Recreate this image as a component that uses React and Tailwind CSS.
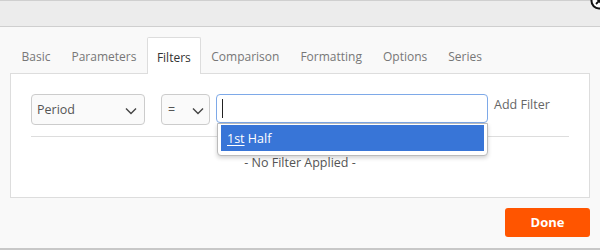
import React from "react";

const tabs = ["Basic", "Parameters", "Filters", "Comparison", "Formatting", "Options", "Series"];

function Chevron() {
  return (
    <svg width="14" height="14" viewBox="0 0 14 14" fill="none" stroke="#444" strokeWidth="1.4">
      <path d="M2 4.5 L7 9.5 L12 4.5" />
    </svg>
  );
}

export default function App() {
  return (
    <div
      className="relative w-[600px] h-[250px] overflow-hidden bg-[#f9f9f9] border-b-2 border-[#c8c8c8]"
      style={{ fontFamily: '"Open Sans", "Noto Sans", sans-serif' }}
    >
      <div className="h-[27px] bg-[#ececec] border-t border-b border-[#cfcfcf]"></div>
      <svg className="absolute right-[-8px] top-[-8px]" width="18" height="18" viewBox="0 0 18 18">
        <circle cx="9" cy="9" r="7.5" fill="#fff" stroke="#111" strokeWidth="2" />
        <path d="M6 6 L12 12 M12 6 L6 12" stroke="#111" strokeWidth="1.8" />
      </svg>

      <div className="flex pl-[11px] pt-[10px]">
        {tabs.map((t) => (
          <div
            key={t}
            className={
              t === "Filters"
                ? "h-[37px] px-[9px] pt-[3px] flex items-center text-[12px] text-[#333] bg-white border border-b-0 border-[#ddd] rounded-t-[2px] relative z-10 mb-[-1px]"
                : "h-[36px] px-[10.5px] pt-[3px] flex items-center text-[12px] text-[#777]"
            }
          >
            {t}
          </div>
        ))}
      </div>

      <div className="mx-[10px] h-[125px] bg-white border border-[#ddd] px-[20px] pt-[20px] relative">
        <div className="flex items-start">
          <div className="w-[114px] h-[31px] rounded-[4px] border border-[#ccc] bg-[#fafafa] flex items-center justify-between pl-[5px] pr-[6px] pt-[2px] text-[12.5px] text-[#555]">
            <span>Period</span>
            <Chevron />
          </div>
          <div className="ml-[16px] w-[49px] h-[31px] rounded-[4px] border border-[#ccc] bg-[#fafafa] flex items-center justify-between pl-[6px] pr-[4px] pt-[2px] text-[12.5px] text-[#555]">
            <span>=</span>
            <Chevron />
          </div>
          <div className="relative ml-[6px]">
            <div className="w-[272px] h-[29px] rounded-[4px] border border-[#7ea9e8] bg-white flex items-center pl-[5px]">
              <div className="w-px h-[19px] bg-[#222]"></div>
            </div>
            <div className="absolute left-[1px] top-[29px] w-[271px] h-[33px] bg-white border border-[#bbb] rounded-b-[4px] shadow-[0_2px_4px_rgba(0,0,0,0.18)] px-[3px] pt-[1px]">
              <div className="h-[26px] bg-[#3875d7] text-white text-[12.5px] flex items-center pl-[6px] pt-[2px]">
                <span className="underline underline-offset-2">1st</span>
                <span>&nbsp;Half</span>
              </div>
            </div>
          </div>
          <div className="ml-[6px] text-[12.5px] text-[#666] leading-[20px] pt-[1px]">Add Filter</div>
        </div>
        <div className="mt-[11px] h-px bg-[#ddd] w-[538px]"></div>
        <div className="text-center text-[12.5px] text-[#555] mt-[17px] leading-[18px]">- No Filter Applied -</div>
      </div>

      <div className="flex justify-end pr-[10px] pt-[10px]">
        <div className="w-[85px] h-[29px] rounded-[3px] bg-[#ff5500] text-white font-bold text-[13px] flex items-center justify-center">
          Done
        </div>
      </div>
    </div>
  );
}
